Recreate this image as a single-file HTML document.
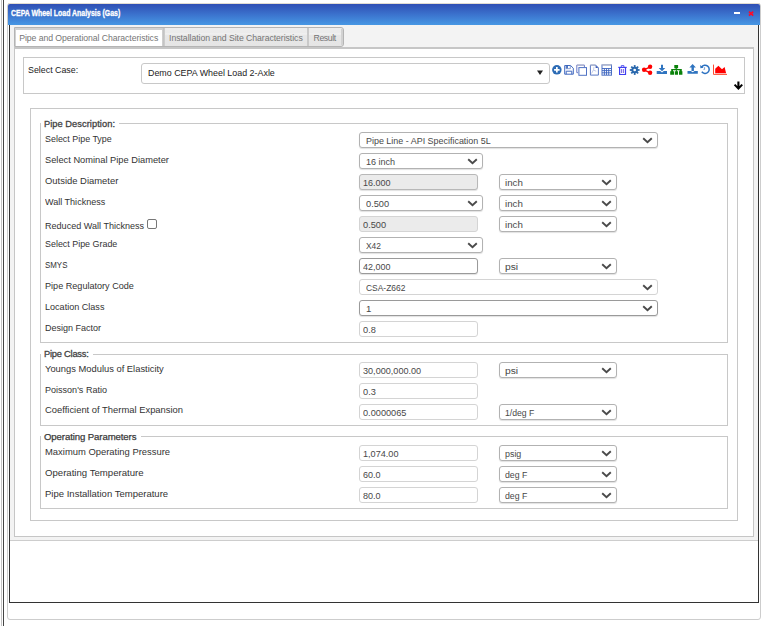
<!DOCTYPE html>
<html><head><meta charset="utf-8">
<style>
*{box-sizing:border-box;margin:0;padding:0}
html,body{width:762px;height:626px;overflow:hidden;background:#fff}
body{position:relative;font-family:"Liberation Sans",sans-serif}
.a{position:absolute}
.t{position:absolute;white-space:nowrap;line-height:0}
.fc{position:absolute;height:16px;border:1px solid #b2b2b2;border-radius:3px;background:#fff;box-shadow:0 1px 1px rgba(0,0,0,.12)}
.fc span{position:absolute;top:7.67px;line-height:0;font-size:9.6px;color:#333;white-space:nowrap}
.fc.dis{background:#ebebeb;border-color:#b8b8b8}
.fc.dark{border-color:#9a9a9a}
.fc.light{border-color:#d4d4d4;box-shadow:none}
.chev{position:absolute;right:3.7px;top:3.7px}
</style></head><body>
<div class="a" style="left:1px;top:0;width:1px;height:626px;background:#c4c4c4"></div>
<div class="a" style="left:3px;top:0;width:1px;height:626px;background:#444"></div>
<div class="a" style="left:7px;top:3px;width:754px;height:617px;border:1px solid #cdcdcd;border-radius:3px"></div>
<div class="a" style="left:8px;top:3px;width:752px;height:1px;background:#e2dcd2"></div>
<div class="a" style="left:8px;top:4px;width:752px;height:21px;border-radius:2px 2px 0 0;background:linear-gradient(#2f4fb4,#3a6fcb 45%,#4797e4)"></div>
<div class="a" style="left:734px;top:12px;width:6px;height:2px;background:#fff"></div>
<svg class="a" style="left:747px;top:10px" width="8" height="7" viewBox="0 0 8 7"><path d="M2 1.6 L6.2 5.6 M6.2 1.6 L2 5.6" stroke="#ff0a28" stroke-width="1.6"/></svg>
<!-- window body -->
<div class="a" style="left:9px;top:25px;width:750px;height:578px;border:1px solid #333;border-top:0;background:#fff"></div>
<div class="a" style="left:10px;top:25px;width:748px;height:516px;background:#f3f3f3;border-bottom:1px solid #cdcdcd"></div>
<!-- tabs -->
<div class="a" style="left:14px;top:27px;width:330px;height:20px;border:1px solid #b4b4b4;border-radius:0 3px 3px 0;background:linear-gradient(#ededed,#ebebeb 5px,#f4f4f4 6px,#e7e7e7 7px,#e5e5e5)"></div>
<div class="a" style="left:15px;top:28px;width:147px;height:18px;background:#fff;border-top:2px solid #d2d2d2;border-left:1px solid #d2d2d2"></div>
<div class="a" style="left:162px;top:28px;width:3px;height:18px;background:linear-gradient(90deg,#d4d4d4,#c4c4c4 50%,#d0d0d0)"></div>
<div class="a" style="left:307px;top:28px;width:2px;height:18px;background:#c9c9c9"></div>
<div class="a" style="left:341px;top:29px;width:2px;height:16px;background:#d2d2d2"></div>
<!-- panel -->
<div class="a" style="left:14px;top:47px;width:740px;height:490px;border:1px solid #c6c6c6;border-top:2px solid #c6c6c6;background:#fff"></div>
<!-- case box -->
<div class="a" style="left:23px;top:57px;width:722px;height:37px;border:1px solid #c8c8c8"></div>
<div class="a" style="left:141px;top:63px;width:409px;height:21px;border:1px solid #c8c8c8;border-radius:3px"></div>
<svg class="a" style="left:536px;top:70px" width="8" height="6" viewBox="0 0 8 6"><path d="M1 0.6 H7 L4 5 Z" fill="#222"/></svg>
<!-- outer box & fieldsets -->
<div class="a" style="left:30px;top:108px;width:708px;height:413px;border:1px solid #c8c8c8"></div>
<div class="a" style="left:40px;top:123px;width:688px;height:220px;border:1px solid #c8c8c8"></div>
<div class="a" style="left:40px;top:354px;width:688px;height:72px;border:1px solid #c8c8c8"></div>
<div class="a" style="left:40px;top:436px;width:688px;height:73px;border:1px solid #c8c8c8"></div>
<!-- legend gaps -->
<div class="a" style="left:41px;top:118px;width:78px;height:10px;background:#fff"></div>
<div class="a" style="left:41px;top:349px;width:52px;height:10px;background:#fff"></div>
<div class="a" style="left:41px;top:431px;width:100px;height:10px;background:#fff"></div>
<!-- checkbox -->
<div class="a" style="left:147px;top:219px;width:10px;height:10px;border:1px solid #777;border-radius:2px;background:#fff"></div>
<svg class="a" style="left:548px;top:60px" width="200" height="32" viewBox="548 60 200 32">
<!-- plus circle -->
<circle cx="556.85" cy="69.85" r="4.75" fill="#2d6cb5"/>
<path d="M556.85 67.1 V72.6 M554.1 69.85 H559.6" stroke="#fff" stroke-width="1.7"/>
<!-- save -->
<path d="M564.7 65.5 H570.6 L573.3 68.2 V74.2 H564.7 Z" fill="none" stroke="#4069c0" stroke-width="1"/>
<rect x="566.2" y="65.5" width="1.6" height="3" fill="#2458b0"/>
<path d="M566 65.5 V68.7 H570.3 V65.5" fill="none" stroke="#6a86c8" stroke-width="0.8"/>
<path d="M566.2 74.2 V71.2 H571.8 V74.2" fill="none" stroke="#4069c0" stroke-width="1"/>
<!-- copy -->
<path d="M578 72.7 H576.8 V65.1 H584.4 V67" fill="none" stroke="#6a78c8" stroke-width="1"/>
<path d="M577 65.1 H584.2" stroke="#b8bccc" stroke-width="1"/>
<rect x="578.9" y="67.6" width="7.6" height="7.7" fill="#fff" stroke="#4f72c4" stroke-width="1"/>
<!-- pdf -->
<path d="M590.4 65.1 H595.7 L598.4 67.8 V75.1 H590.4 Z" fill="none" stroke="#5a78c4" stroke-width="1"/>
<path d="M590.4 65.1 H595.5" stroke="#b8bccc" stroke-width="1"/>
<path d="M595.6 65.2 V68 H598.3 Z" fill="#3a5ab8"/>
<path d="M591.5 73.5 L593.6 69.6 L594 66.8 M593.6 70.2 L596.2 71.2" fill="none" stroke="#9aa8d8" stroke-width="0.6"/>
<!-- calculator -->
<rect x="602" y="64.9" width="9.5" height="10.3" fill="none" stroke="#4f72c4" stroke-width="1"/>
<path d="M602 64.9 H611.5" stroke="#b8bccc" stroke-width="1.2"/>
<path d="M602 68.5 H611.5 M602 70.6 H611.5 M602 72.8 H611.5 M604.4 68.5 V75 M606.5 68.5 V75 M608.7 68.5 V75" stroke="#3c64c0" stroke-width="0.9"/>
<!-- trash -->
<path d="M618.3 67.4 H626.7" stroke="#3f3ff0" stroke-width="1.2"/>
<path d="M621.3 67.2 V65.6 H623.9 V67.2" fill="none" stroke="#5a5af0" stroke-width="1"/>
<path d="M619.6 67.6 V74.5 H625.5 V67.6" fill="none" stroke="#3f3ff0" stroke-width="1.2"/>
<path d="M621.6 69 V73 M623.4 69 V73" stroke="#6a50e0" stroke-width="0.9"/>
<!-- gear -->
<g transform="translate(634.7 70)" fill="#2a68ad">
<circle r="3.3"/><rect x="-0.9" y="-4.9" width="1.8" height="2.4" transform="rotate(0)"/><rect x="-0.9" y="-4.9" width="1.8" height="2.4" transform="rotate(45)"/><rect x="-0.9" y="-4.9" width="1.8" height="2.4" transform="rotate(90)"/><rect x="-0.9" y="-4.9" width="1.8" height="2.4" transform="rotate(135)"/><rect x="-0.9" y="-4.9" width="1.8" height="2.4" transform="rotate(180)"/><rect x="-0.9" y="-4.9" width="1.8" height="2.4" transform="rotate(225)"/><rect x="-0.9" y="-4.9" width="1.8" height="2.4" transform="rotate(270)"/><rect x="-0.9" y="-4.9" width="1.8" height="2.4" transform="rotate(315)"/>
<circle r="1.35" fill="#fff"/>
</g>
<!-- share -->
<path d="M644.1 69.8 L650.1 66.8 M644.1 69.8 L650.1 72.8" stroke="#f00" stroke-width="1.5"/>
<circle cx="644.1" cy="69.8" r="2.2" fill="#f00"/>
<circle cx="650.1" cy="66.7" r="2.2" fill="#f00"/>
<circle cx="650.1" cy="72.8" r="2.2" fill="#f00"/>
<!-- download -->
<path d="M661 64.8 H663 V68 H665.3 L662 71.2 L658.7 68 H661 Z" fill="#2f74c0"/>
<path d="M656.7 71 H660.2 L662 72.4 L663.8 71 H667 V73.9 H656.7 Z" fill="#2f74c0"/>
<!-- sitemap -->
<path d="M674.3 65 H678.1 V68.3 H676.8 V69 H681.8 V71.2 H682.4 V74.7 H679 V71.2 H679.6 V70.2 H676.8 V71.2 H678 V74.7 H675 V71.2 H675.9 V70.2 H673 V71.2 H674.2 V74.7 H670.2 V71.2 H671.2 V69 H675.6 V68.3 H674.3 Z" fill="#0a820a"/>
<!-- upload -->
<path d="M692.6 64.1 L695.9 67.6 H693.9 V71 H691.5 V67.6 H689.4 Z" fill="#2f74c0"/>
<path d="M687.5 71 H690.8 L692.7 72.3 L694.6 71 H697.8 V73.8 H687.5 Z" fill="#2f74c0"/>
<!-- history -->
<path d="M701.6 67.2 A4.1 4.1 0 1 1 701.8 71.8" fill="none" stroke="#2a70c0" stroke-width="1.5"/>
<path d="M700.2 64.9 L700.4 68.3 L703.6 67.7 Z" fill="#2a70c0"/>
<path d="M704.6 67.2 V69.4 H703.5" fill="none" stroke="#5a88c8" stroke-width="0.8"/>
<!-- area chart -->
<path d="M713.5 64.6 V74.4 H727" fill="none" stroke="#ff4a30" stroke-width="1"/>
<path d="M715.2 73.2 V68.8 L718.4 65.7 L722 69.3 L724.6 67.1 L726.1 73.2 Z" fill="#f00"/>
<!-- arrow down -->
<path d="M738.4 81.4 V88 M734.6 84.6 L738.4 88.6 L742.2 84.6" fill="none" stroke="#000" stroke-width="2.1"/>
</svg>

<div class="fc sel" style="left:359px;top:132px;width:299px"><svg class="chev" width="11" height="7" viewBox="0 0 11 7"><path d="M1.2 1.2 L5.5 5.1 L9.8 1.2" fill="none" stroke="#4a4a4a" stroke-width="1.9"/></svg></div>
<div class="fc sel" style="left:359px;top:153px;width:124px"><svg class="chev" width="11" height="7" viewBox="0 0 11 7"><path d="M1.2 1.2 L5.5 5.1 L9.8 1.2" fill="none" stroke="#4a4a4a" stroke-width="1.9"/></svg></div>
<div class="fc inp dis" style="left:359px;top:174px;width:119px"></div>
<div class="fc sel" style="left:499px;top:174px;width:118px"><svg class="chev" width="11" height="7" viewBox="0 0 11 7"><path d="M1.2 1.2 L5.5 5.1 L9.8 1.2" fill="none" stroke="#4a4a4a" stroke-width="1.9"/></svg></div>
<div class="fc sel" style="left:359px;top:195px;width:124px"><svg class="chev" width="11" height="7" viewBox="0 0 11 7"><path d="M1.2 1.2 L5.5 5.1 L9.8 1.2" fill="none" stroke="#4a4a4a" stroke-width="1.9"/></svg></div>
<div class="fc sel" style="left:499px;top:195px;width:118px"><svg class="chev" width="11" height="7" viewBox="0 0 11 7"><path d="M1.2 1.2 L5.5 5.1 L9.8 1.2" fill="none" stroke="#4a4a4a" stroke-width="1.9"/></svg></div>
<div class="fc inp dis light" style="left:359px;top:216px;width:119px"></div>
<div class="fc sel" style="left:499px;top:216px;width:118px"><svg class="chev" width="11" height="7" viewBox="0 0 11 7"><path d="M1.2 1.2 L5.5 5.1 L9.8 1.2" fill="none" stroke="#4a4a4a" stroke-width="1.9"/></svg></div>
<div class="fc sel" style="left:359px;top:237px;width:124px"><svg class="chev" width="11" height="7" viewBox="0 0 11 7"><path d="M1.2 1.2 L5.5 5.1 L9.8 1.2" fill="none" stroke="#4a4a4a" stroke-width="1.9"/></svg></div>
<div class="fc inp dark" style="left:359px;top:258px;width:119px"></div>
<div class="fc sel" style="left:499px;top:258px;width:118px"><svg class="chev" width="11" height="7" viewBox="0 0 11 7"><path d="M1.2 1.2 L5.5 5.1 L9.8 1.2" fill="none" stroke="#4a4a4a" stroke-width="1.9"/></svg></div>
<div class="fc sel light" style="left:359px;top:279px;width:299px"><svg class="chev" width="11" height="7" viewBox="0 0 11 7"><path d="M1.2 1.2 L5.5 5.1 L9.8 1.2" fill="none" stroke="#4a4a4a" stroke-width="1.9"/></svg></div>
<div class="fc sel dark" style="left:359px;top:300px;width:299px"><svg class="chev" width="11" height="7" viewBox="0 0 11 7"><path d="M1.2 1.2 L5.5 5.1 L9.8 1.2" fill="none" stroke="#4a4a4a" stroke-width="1.9"/></svg></div>
<div class="fc inp light" style="left:359px;top:321px;width:119px"></div>
<div class="fc inp light" style="left:359px;top:362px;width:119px"></div>
<div class="fc sel" style="left:499px;top:362px;width:118px"><svg class="chev" width="11" height="7" viewBox="0 0 11 7"><path d="M1.2 1.2 L5.5 5.1 L9.8 1.2" fill="none" stroke="#4a4a4a" stroke-width="1.9"/></svg></div>
<div class="fc inp light" style="left:359px;top:383px;width:119px"></div>
<div class="fc inp light" style="left:359px;top:404px;width:119px"></div>
<div class="fc sel" style="left:499px;top:404px;width:118px"><svg class="chev" width="11" height="7" viewBox="0 0 11 7"><path d="M1.2 1.2 L5.5 5.1 L9.8 1.2" fill="none" stroke="#4a4a4a" stroke-width="1.9"/></svg></div>
<div class="fc inp light" style="left:359px;top:445px;width:119px"></div>
<div class="fc sel" style="left:499px;top:445px;width:118px"><svg class="chev" width="11" height="7" viewBox="0 0 11 7"><path d="M1.2 1.2 L5.5 5.1 L9.8 1.2" fill="none" stroke="#4a4a4a" stroke-width="1.9"/></svg></div>
<div class="fc inp light" style="left:359px;top:466px;width:119px"></div>
<div class="fc sel" style="left:499px;top:466px;width:118px"><svg class="chev" width="11" height="7" viewBox="0 0 11 7"><path d="M1.2 1.2 L5.5 5.1 L9.8 1.2" fill="none" stroke="#4a4a4a" stroke-width="1.9"/></svg></div>
<div class="fc inp light" style="left:359px;top:487px;width:119px"></div>
<div class="fc sel" style="left:499px;top:487px;width:118px"><svg class="chev" width="11" height="7" viewBox="0 0 11 7"><path d="M1.2 1.2 L5.5 5.1 L9.8 1.2" fill="none" stroke="#4a4a4a" stroke-width="1.9"/></svg></div>
<div class="t" style="left:11.00px;top:12.92px;font-size:8.3px;font-weight:bold;color:#fff;transform:scaleX(0.8366);transform-origin:0 0;-webkit-text-stroke:0.3px #fff;">CEPA Wheel Load Analysis (Gas)</div>
<div class="t" style="left:19.20px;top:37.99px;font-size:8.7px;font-weight:normal;color:#757575;letter-spacing:-0.070px;">Pipe and Operational Characteristics</div>
<div class="t" style="left:169.10px;top:37.99px;font-size:8.7px;font-weight:normal;color:#757575;letter-spacing:-0.057px;">Installation and Site Characteristics</div>
<div class="t" style="left:313.60px;top:37.99px;font-size:8.7px;font-weight:normal;color:#757575;letter-spacing:-0.422px;">Result</div>
<div class="t" style="left:28.00px;top:69.60px;font-size:9.8px;font-weight:normal;color:#222;transform:scaleX(0.9029);transform-origin:0 0;">Select Case:</div>
<div class="t" style="left:148.20px;top:72.60px;font-size:9.8px;font-weight:normal;color:#222;transform:scaleX(0.9073);transform-origin:0 0;">Demo CEPA Wheel Load 2-Axle</div>
<div class="t" style="left:43.90px;top:123.78px;font-size:9.3px;font-weight:normal;color:#444;letter-spacing:0.050px;-webkit-text-stroke:0.3px #444;">Pipe Description:</div>
<div class="t" style="left:44.00px;top:353.78px;font-size:9.3px;font-weight:normal;color:#444;letter-spacing:-0.224px;-webkit-text-stroke:0.3px #444;">Pipe Class:</div>
<div class="t" style="left:44.00px;top:436.67px;font-size:9.6px;font-weight:normal;color:#3a3a3a;letter-spacing:-0.099px;-webkit-text-stroke:0.25px #3a3a3a;">Operating Parameters</div>
<div class="t" style="left:45.20px;top:138.60px;font-size:9.8px;font-weight:normal;color:#333;transform:scaleX(0.9099);transform-origin:0 0;">Select Pipe Type</div>
<div class="t" style="left:45.20px;top:159.60px;font-size:9.8px;font-weight:normal;color:#333;transform:scaleX(0.9481);transform-origin:0 0;">Select Nominal Pipe Diameter</div>
<div class="t" style="left:45.20px;top:180.60px;font-size:9.8px;font-weight:normal;color:#333;transform:scaleX(0.9615);transform-origin:0 0;">Outside Diameter</div>
<div class="t" style="left:45.20px;top:201.60px;font-size:9.8px;font-weight:normal;color:#333;transform:scaleX(0.9221);transform-origin:0 0;">Wall Thickness</div>
<div class="t" style="left:45.20px;top:225.90px;font-size:9.8px;font-weight:normal;color:#333;transform:scaleX(0.9242);transform-origin:0 0;">Reduced Wall Thickness</div>
<div class="t" style="left:45.20px;top:243.60px;font-size:9.8px;font-weight:normal;color:#333;transform:scaleX(0.9093);transform-origin:0 0;">Select Pipe Grade</div>
<div class="t" style="left:45.20px;top:264.60px;font-size:9.8px;font-weight:normal;color:#333;transform:scaleX(0.8077);transform-origin:0 0;">SMYS</div>
<div class="t" style="left:45.20px;top:285.60px;font-size:9.8px;font-weight:normal;color:#333;transform:scaleX(0.9274);transform-origin:0 0;">Pipe Regulatory Code</div>
<div class="t" style="left:45.20px;top:306.60px;font-size:9.8px;font-weight:normal;color:#333;transform:scaleX(0.9245);transform-origin:0 0;">Location Class</div>
<div class="t" style="left:45.20px;top:327.60px;font-size:9.8px;font-weight:normal;color:#333;transform:scaleX(0.9203);transform-origin:0 0;">Design Factor</div>
<div class="t" style="left:45.20px;top:368.60px;font-size:9.8px;font-weight:normal;color:#333;transform:scaleX(0.9554);transform-origin:0 0;">Youngs Modulus of Elasticity</div>
<div class="t" style="left:45.20px;top:389.60px;font-size:9.8px;font-weight:normal;color:#333;transform:scaleX(0.9223);transform-origin:0 0;">Poisson's Ratio</div>
<div class="t" style="left:45.20px;top:410.10px;font-size:9.8px;font-weight:normal;color:#333;transform:scaleX(0.9591);transform-origin:0 0;">Coefficient of Thermal Expansion</div>
<div class="t" style="left:45.20px;top:451.60px;font-size:9.8px;font-weight:normal;color:#333;transform:scaleX(0.9612);transform-origin:0 0;">Maximum Operating Pressure</div>
<div class="t" style="left:45.20px;top:472.60px;font-size:9.8px;font-weight:normal;color:#333;transform:scaleX(0.9803);transform-origin:0 0;">Operating Temperature</div>
<div class="t" style="left:45.20px;top:493.60px;font-size:9.8px;font-weight:normal;color:#333;transform:scaleX(0.9715);transform-origin:0 0;">Pipe Installation Temperature</div>
<div class="t" style="left:366.00px;top:140.67px;font-size:9.6px;font-weight:normal;color:#484848;transform:scaleX(0.9315);transform-origin:0 0;">Pipe Line - API Specification 5L</div>
<div class="t" style="left:366.00px;top:161.67px;font-size:9.6px;font-weight:normal;color:#484848;transform:scaleX(0.9412);transform-origin:0 0;">16 inch</div>
<div class="t" style="left:362.80px;top:182.67px;font-size:9.6px;font-weight:normal;color:#484848;transform:scaleX(0.9377);transform-origin:0 0;">16.000</div>
<div class="t" style="left:505.30px;top:182.67px;font-size:9.6px;font-weight:normal;color:#484848;transform:scaleX(1.0137);transform-origin:0 0;">inch</div>
<div class="t" style="left:366.00px;top:203.67px;font-size:9.6px;font-weight:normal;color:#484848;transform:scaleX(0.9632);transform-origin:0 0;">0.500</div>
<div class="t" style="left:505.30px;top:203.67px;font-size:9.6px;font-weight:normal;color:#484848;transform:scaleX(1.0137);transform-origin:0 0;">inch</div>
<div class="t" style="left:362.80px;top:224.67px;font-size:9.6px;font-weight:normal;color:#484848;transform:scaleX(0.9632);transform-origin:0 0;">0.500</div>
<div class="t" style="left:505.30px;top:224.67px;font-size:9.6px;font-weight:normal;color:#484848;transform:scaleX(1.0137);transform-origin:0 0;">inch</div>
<div class="t" style="left:366.00px;top:245.67px;font-size:9.6px;font-weight:normal;color:#484848;transform:scaleX(0.8784);transform-origin:0 0;">X42</div>
<div class="t" style="left:362.80px;top:266.67px;font-size:9.6px;font-weight:normal;color:#484848;transform:scaleX(0.9342);transform-origin:0 0;">42,000</div>
<div class="t" style="left:505.30px;top:266.67px;font-size:9.6px;font-weight:normal;color:#484848;transform:scaleX(1.0715);transform-origin:0 0;">psi</div>
<div class="t" style="left:366.00px;top:287.67px;font-size:9.6px;font-weight:normal;color:#484848;transform:scaleX(0.8796);transform-origin:0 0;">CSA-Z662</div>
<div class="t" style="left:366.00px;top:308.67px;font-size:9.6px;font-weight:normal;color:#484848;">1</div>
<div class="t" style="left:362.80px;top:329.67px;font-size:9.6px;font-weight:normal;color:#484848;transform:scaleX(0.9615);transform-origin:0 0;">0.8</div>
<div class="t" style="left:362.80px;top:370.67px;font-size:9.6px;font-weight:normal;color:#484848;transform:scaleX(0.9473);transform-origin:0 0;">30,000,000.00</div>
<div class="t" style="left:505.30px;top:370.67px;font-size:9.6px;font-weight:normal;color:#484848;transform:scaleX(1.0715);transform-origin:0 0;">psi</div>
<div class="t" style="left:362.80px;top:391.67px;font-size:9.6px;font-weight:normal;color:#484848;transform:scaleX(0.9615);transform-origin:0 0;">0.3</div>
<div class="t" style="left:362.80px;top:412.67px;font-size:9.6px;font-weight:normal;color:#484848;transform:scaleX(0.9575);transform-origin:0 0;">0.0000065</div>
<div class="t" style="left:505.30px;top:412.67px;font-size:9.6px;font-weight:normal;color:#484848;transform:scaleX(0.9029);transform-origin:0 0;">1/deg F</div>
<div class="t" style="left:362.80px;top:453.67px;font-size:9.6px;font-weight:normal;color:#484848;transform:scaleX(0.9511);transform-origin:0 0;">1,074.00</div>
<div class="t" style="left:505.30px;top:453.67px;font-size:9.6px;font-weight:normal;color:#484848;transform:scaleX(0.9268);transform-origin:0 0;">psig</div>
<div class="t" style="left:362.80px;top:474.67px;font-size:9.6px;font-weight:normal;color:#484848;transform:scaleX(0.9435);transform-origin:0 0;">60.0</div>
<div class="t" style="left:505.30px;top:474.67px;font-size:9.6px;font-weight:normal;color:#484848;transform:scaleX(0.9120);transform-origin:0 0;">deg F</div>
<div class="t" style="left:362.80px;top:495.67px;font-size:9.6px;font-weight:normal;color:#484848;transform:scaleX(0.9435);transform-origin:0 0;">80.0</div>
<div class="t" style="left:505.30px;top:495.67px;font-size:9.6px;font-weight:normal;color:#484848;transform:scaleX(0.9120);transform-origin:0 0;">deg F</div>
</body></html>
